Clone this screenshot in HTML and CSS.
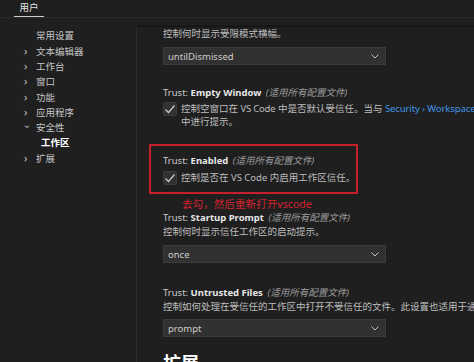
FILE: index.html
```html
<!DOCTYPE html>
<html lang="zh-CN">
<head>
    <meta charset="UTF-8">
    <title>设置 - 工作区信任</title>
    <link rel="stylesheet" href="styles.css">
</head>
<body>
    <div class="header">
        <div class="tab">用户</div>
    </div>

    <div class="main">
        <div class="toc">
            <div class="toc-item leaf">常用设置</div>
            <div class="toc-item"><span class="chev">›</span>文本编辑器</div>
            <div class="toc-item"><span class="chev">›</span>工作台</div>
            <div class="toc-item"><span class="chev">›</span>窗口</div>
            <div class="toc-item"><span class="chev">›</span>功能</div>
            <div class="toc-item"><span class="chev">›</span>应用程序</div>
            <div class="toc-item"><span class="chev open">›</span>安全性</div>
            <div class="toc-item child">工作区</div>
            <div class="toc-item"><span class="chev">›</span>扩展</div>
        </div>

        <div class="content">
            <div class="setting first">
                <div class="desc">控制何时显示受限模式横幅。</div>
                <div class="select">
                    <span>untilDismissed</span>
                    <svg class="arrow" width="8" height="5" viewBox="0 0 8 5"><path d="M0.5 0.5 L4 4 L7.5 0.5" fill="none" stroke="#c5c5c5" stroke-width="1"/></svg>
                </div>
            </div>

            <div class="setting">
                <div class="title">Trust: <b>Empty Window</b> <i>(适用所有配置文件)</i></div>
                <div class="check-row">
                    <span class="checkbox"><svg width="12" height="12" viewBox="0 0 12 12"><path d="M1.5 6.5 L4.5 9.5 L10.5 2.5" fill="none" stroke="#cccccc" stroke-width="1.2"/></svg></span>
                    <div class="desc">
                        <span class="line">控制空窗口在 <span class="latin">VS Code</span> 中是否默认受信任。当与 <a class="link">Security › Workspace › Trust: Untrusted Files</a> 一起使用时，你可以在空窗口中启用 VS Code 的完整功能，而无需在空窗口</span>
                        <span class="line">中进行提示。</span>
                    </div>
                </div>
            </div>

            <div class="setting marked">
                <div class="title">Trust: <b>Enabled</b> <i>(适用所有配置文件)</i></div>
                <div class="check-row">
                    <span class="checkbox"><svg width="12" height="12" viewBox="0 0 12 12"><path d="M1.5 6.5 L4.5 9.5 L10.5 2.5" fill="none" stroke="#cccccc" stroke-width="1.2"/></svg></span>
                    <div class="desc">控制是否在 VS Code 内启用工作区信任。</div>
                </div>
            </div>
            <div class="note">去勾，然后重新打开vscode</div>

            <div class="setting tight">
                <div class="title">Trust: <b>Startup Prompt</b> <i>(适用所有配置文件)</i></div>
                <div class="desc">控制何时显示信任工作区的启动提示。</div>
                <div class="select">
                    <span>once</span>
                    <svg class="arrow" width="8" height="5" viewBox="0 0 8 5"><path d="M0.5 0.5 L4 4 L7.5 0.5" fill="none" stroke="#c5c5c5" stroke-width="1"/></svg>
                </div>
            </div>

            <div class="setting last">
                <div class="title">Trust: <b>Untrusted Files</b> <i>(适用所有配置文件)</i></div>
                <div class="desc"><span class="line">控制如何处理在受信任的工作区中打开不受信任的文件。此设置也适用于通过 VS Code 外部打开的空窗口中的文件。</span></div>
                <div class="select small-gap">
                    <span>prompt</span>
                    <svg class="arrow" width="8" height="5" viewBox="0 0 8 5"><path d="M0.5 0.5 L4 4 L7.5 0.5" fill="none" stroke="#c5c5c5" stroke-width="1"/></svg>
                </div>
            </div>

            <h2 class="group-title">扩展</h2>
        </div>
    </div>
</body>
</html>
```

FILE: styles.css
```css
body {
    margin: 0;
    width: 474px;
    height: 362px;
    overflow: hidden;
    background: #1f1f1f;
    color: #cccccc;
    font-family: "Noto Sans", "Noto Sans CJK SC", sans-serif;
    font-size: 9.5px;
}
.header {
    height: 17px;
    border-bottom: 1px solid #2b2b2b;
    padding-left: 14px;
}
.tab {
    display: inline-block;
    box-sizing: border-box;
    width: 30px;
    height: 17px;
    line-height: 15px;
    text-align: center;
    color: #e7e7e7;
    border-bottom: 1px solid #cccccc;
}
.main {
    display: flex;
    margin-top: 8px;
}
.toc {
    width: 136px;
    flex-shrink: 0;
    border-right: 1px solid #2b2b2b;
    padding-top: 1.5px;
    height: 340px;
}
.toc-item {
    height: 15.3px;
    line-height: 15.3px;
    padding-left: 24px;
    color: #c5c5c5;
    white-space: nowrap;
}
.toc-item.leaf {
    padding-left: 36px;
}
.toc-item.child {
    padding-left: 41px;
    font-weight: bold;
    color: #ffffff;
}
.chev {
    display: inline-block;
    width: 12px;
    font-size: 11px;
    color: #c5c5c5;
}
.chev.open {
    transform: rotate(90deg);
    width: 8px;
    margin-right: 4px;
    text-align: center;
}
.content {
    flex: 1;
    border-top: 1px solid #141414;
    box-shadow: 0 -1px 0 #181818;
    white-space: nowrap;
    min-width: 0;
}
.setting {
    padding-left: 26px;
    margin-top: 21px;
}
.setting.first {
    margin-top: 0;
}
.setting.tight {
    margin-top: 0;
}
.setting.last {
    margin-top: 23px;
}
.title {
    line-height: 14px;
    color: #cccccc;
}
.title b {
    color: #e7e7e7;
}
.title i {
    color: #9d9d9d;
    margin-left: 2px;
}
.desc {
    line-height: 13px;
    color: #bdbdbd;
}
.line {
    display: block;
}
.latin {
    letter-spacing: -0.2px;
}
.link {
    color: #3f95e6;
    letter-spacing: -0.1px;
}
.select {
    box-sizing: border-box;
    width: 223px;
    height: 18px;
    margin-top: 7px;
    padding: 0 6px 0 4px;
    background: #313131;
    border: 1px solid #3a3a3a;
    display: flex;
    align-items: center;
    justify-content: space-between;
    color: #cccccc;
}
.select.small-gap {
    margin-top: 6px;
}
.check-row {
    display: flex;
    gap: 4px;
    margin-top: 2px;
    align-items: flex-start;
}
.checkbox {
    box-sizing: border-box;
    width: 14px;
    height: 14px;
    flex-shrink: 0;
    background: #313131;
    border: 1px solid #3c3c3c;
    border-radius: 2px;
    display: flex;
    align-items: center;
    justify-content: center;
}
.setting.marked {
    box-sizing: border-box;
    width: 209px;
    margin-top: 16px;
    margin-left: 12px;
    padding: 8px 0 7px 12px;
    border: 2px solid #c4212c;
}
.setting.marked .check-row {
    margin-top: 3px;
}
.note {
    margin-top: 4px;
    padding-left: 45px;
    line-height: 13px;
    font-size: 10.6px;
    color: #d3232e;
}
.group-title {
    margin: 14px 0 0 0;
    padding-left: 26px;
    font-size: 18px;
    line-height: 24px;
    font-weight: bold;
    color: #ffffff;
}
```
